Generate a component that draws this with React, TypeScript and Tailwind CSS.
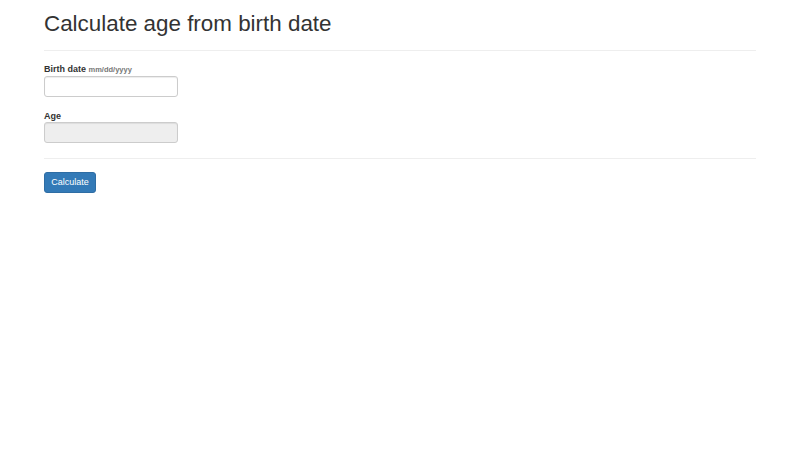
export default function App() {
  return (
    <div
      className="min-h-[450px] bg-white px-[44px] text-[#333]"
      style={{ fontFamily: '"Liberation Sans", Arial, sans-serif' }}
    >
      <h1 className="pt-[11px] text-[22.4px] leading-[25px] font-normal">Calculate age from birth date</h1>
      <hr className="mt-[14px] border-t border-[#eee]" />

      <form className="pt-[12px]" onSubmit={(e) => e.preventDefault()}>
        <div className="flex flex-col">
          <label htmlFor="birth" className="text-[9px] leading-[12px] font-bold">
            Birth date <small className="text-[7.5px] font-bold text-[#777]">mm/dd/yyyy</small>
          </label>
          <input
            id="birth"
            type="text"
            className="h-[21px] w-[134px] rounded-[3px] border border-[#ccc] bg-white px-2 text-[9px] shadow-[inset_0_1px_1px_rgba(0,0,0,0.075)] outline-none"
          />
        </div>

        <div className="mt-[13px] flex flex-col">
          <label htmlFor="age" className="text-[9px] leading-[12px] font-bold">
            Age
          </label>
          <input
            id="age"
            type="text"
            disabled
            className="h-[21px] w-[134px] rounded-[3px] border border-[#ccc] bg-[#eee] px-2 text-[9px] shadow-[inset_0_1px_1px_rgba(0,0,0,0.075)]"
          />
        </div>

        <hr className="mt-[15px] border-t border-[#eee]" />

        <button
          type="submit"
          className="mt-[13px] h-[21px] w-[52px] rounded-[3px] border border-[#2e6da4] bg-[#337ab7] text-[9px] text-white"
        >
          Calculate
        </button>
      </form>
    </div>
  )
}
